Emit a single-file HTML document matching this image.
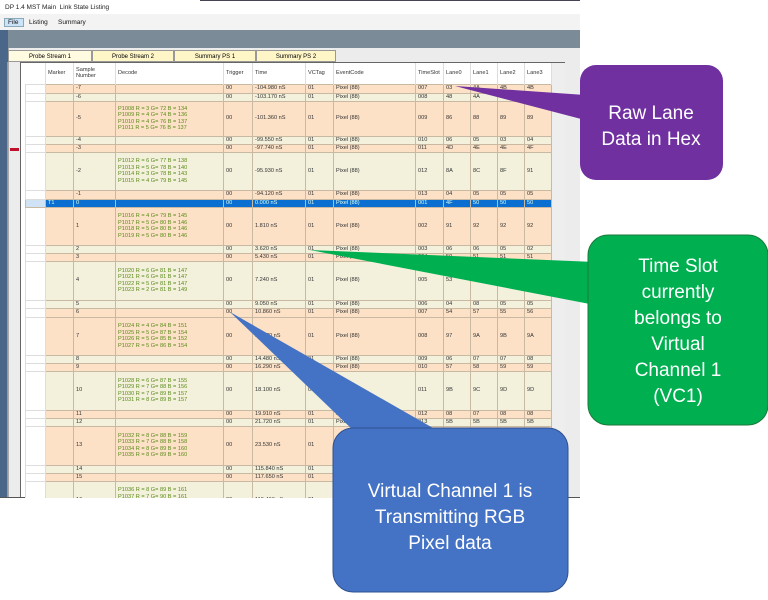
<!DOCTYPE html>
<html><head><meta charset="utf-8"><style>
*{margin:0;padding:0;box-sizing:border-box}
body{width:768px;height:600px;background:#fff;position:relative;overflow:hidden;font-family:"Liberation Sans",sans-serif}
.abs{position:absolute}
table{border-collapse:collapse;table-layout:fixed;font-size:5.6px;color:#333}
td{border:1px solid #c9b9a3;padding:0 2px;vertical-align:middle;white-space:nowrap;overflow:hidden;line-height:6.5px}
tr.p td{background:#fde1c6}
tr.c td{background:#f3f1dc}
tr.b td{background:#0a6fd1;color:#dfe}
td.h{background:#fff!important;border-color:#ddd}
.g{color:#5a8a1a}
th{font-weight:normal;font-size:5.6px;text-align:left;padding:0 2px;border-right:1px solid #ddd;color:#333;line-height:6px}
.t{font-size:19px;fill:#fff;text-anchor:middle;font-family:"Liberation Sans",sans-serif}
</style></head><body>
<div class="abs" style="left:0;top:0;width:580px;height:14px;background:#fff;font-size:6.5px;padding:4px 0 0 5px;color:#222">DP 1.4 MST Main &nbsp;Link State Listing</div>
<div class="abs" style="left:200px;top:0;width:380px;height:1px;background:#445"></div>
<div class="abs" style="left:0;top:14px;width:580px;height:16px;background:#f3f3f3;font-size:6.5px;color:#111"><span style="position:absolute;left:4px;top:4px;width:20px;height:9px;background:#cce3f7;border:1px solid #8ab;padding-left:3px">File</span><span style="position:absolute;left:29px;top:5px">Listing</span><span style="position:absolute;left:58px;top:5px">Summary</span></div>
<div class="abs" style="left:0;top:30px;width:580px;height:18px;background:#7c8b98"></div>
<div class="abs" style="left:0;top:48px;width:580px;height:450px;background:#ececec"></div>
<div class="abs" style="left:0;top:30px;width:8px;height:468px;background:#4a6688"></div>
<div class="abs" style="left:7px;top:62px;width:1px;height:436px;background:#999"></div>
<div class="abs" style="left:8px;top:48px;width:1px;height:450px;background:#aaa"></div>
<div class="abs" style="left:10px;top:148px;width:9px;height:3px;background:#c0102a"></div>
<div class="abs" style="left:20px;top:62px;width:1px;height:436px;background:#666"></div>
<div class="abs" style="left:8px;top:50px;width:84px;height:12px;background:#fffbe0;border:1px solid #999;font-size:6px;text-align:center;padding-top:3px">Probe Stream 1</div>
<div class="abs" style="left:92px;top:50px;width:82px;height:12px;background:#fff6c8;border:1px solid #999;font-size:6px;text-align:center;padding-top:3px">Probe Stream 2</div>
<div class="abs" style="left:174px;top:50px;width:82px;height:12px;background:#fff6c8;border:1px solid #999;font-size:6px;text-align:center;padding-top:3px">Summary PS 1</div>
<div class="abs" style="left:256px;top:50px;width:80px;height:12px;background:#fff6c8;border:1px solid #999;font-size:6px;text-align:center;padding-top:3px">Summary PS 2</div>
<div class="abs" style="left:21px;top:62px;width:544px;height:436px;background:#fff;border-top:1px solid #666"></div>
<div class="abs" style="left:551px;top:63px;width:14px;height:435px;background:#eee"></div>
<div class="abs" style="left:0;top:497px;width:580px;height:1px;background:#555"></div>
<table class="abs" style="left:25px;top:63px;width:526px">
<colgroup><col style="width:20px"><col style="width:28px"><col style="width:42px"><col style="width:108px"><col style="width:29px"><col style="width:53px"><col style="width:28px"><col style="width:82px"><col style="width:28px"><col style="width:27px"><col style="width:27px"><col style="width:27px"><col style="width:27px"></colgroup>
<tr style="height:21px;background:#fff"><th></th><th>Marker</th><th>Sample<br>Number</th><th>Decode</th><th>Trigger</th><th>Time</th><th>VCTag</th><th>EventCode</th><th>TimeSlot</th><th>Lane0</th><th>Lane1</th><th>Lane2</th><th>Lane3</th></tr>
<tr class="p" style="height:9px"><td class="h"></td><td></td><td>-7</td><td></td><td>00</td><td>-104.980 nS</td><td>01</td><td>Pixel (88)</td><td>007</td><td>03</td><td>4A</td><td>4B</td><td>4B</td></tr>
<tr class="c" style="height:8px"><td class="h"></td><td></td><td>-6</td><td></td><td>00</td><td>-103.170 nS</td><td>01</td><td>Pixel (88)</td><td>008</td><td>48</td><td>4A</td><td>4B</td><td>4B</td></tr>
<tr class="p" style="height:35px"><td class="h"></td><td></td><td>-5</td><td class="g">P1008 R = 3 G= 72 B = 134<br>P1009 R = 4 G= 74 B = 136<br>P1010 R = 4 G= 76 B = 137<br>P1011 R = 5 G= 76 B = 137</td><td>00</td><td>-101.360 nS</td><td>01</td><td>Pixel (88)</td><td>009</td><td>86</td><td>88</td><td>89</td><td>89</td></tr>
<tr class="c" style="height:8px"><td class="h"></td><td></td><td>-4</td><td></td><td>00</td><td>-99.550 nS</td><td>01</td><td>Pixel (88)</td><td>010</td><td>06</td><td>05</td><td>03</td><td>04</td></tr>
<tr class="p" style="height:8px"><td class="h"></td><td></td><td>-3</td><td></td><td>00</td><td>-97.740 nS</td><td>01</td><td>Pixel (88)</td><td>011</td><td>4D</td><td>4E</td><td>4E</td><td>4F</td></tr>
<tr class="c" style="height:38px"><td class="h"></td><td></td><td>-2</td><td class="g">P1012 R = 6 G= 77 B = 138<br>P1013 R = 5 G= 78 B = 140<br>P1014 R = 3 G= 78 B = 143<br>P1015 R = 4 G= 79 B = 145</td><td>00</td><td>-95.930 nS</td><td>01</td><td>Pixel (88)</td><td>012</td><td>8A</td><td>8C</td><td>8F</td><td>91</td></tr>
<tr class="p" style="height:9px"><td class="h"></td><td></td><td>-1</td><td></td><td>00</td><td>-94.120 nS</td><td>01</td><td>Pixel (88)</td><td>013</td><td>04</td><td>05</td><td>05</td><td>05</td></tr>
<tr class="b" style="height:8px"><td style="background:#cfe3f5"></td><td>T1</td><td>0</td><td></td><td>00</td><td>0.000 nS</td><td>01</td><td>Pixel (88)</td><td>001</td><td>4F</td><td>50</td><td>50</td><td>50</td></tr>
<tr class="p" style="height:38px"><td class="h"></td><td></td><td>1</td><td class="g">P1016 R = 4 G= 79 B = 145<br>P1017 R = 5 G= 80 B = 146<br>P1018 R = 5 G= 80 B = 146<br>P1019 R = 5 G= 80 B = 146</td><td>00</td><td>1.810 nS</td><td>01</td><td>Pixel (88)</td><td>002</td><td>91</td><td>92</td><td>92</td><td>92</td></tr>
<tr class="c" style="height:8px"><td class="h"></td><td></td><td>2</td><td></td><td>00</td><td>3.620 nS</td><td>01</td><td>Pixel (88)</td><td>003</td><td>06</td><td>06</td><td>05</td><td>02</td></tr>
<tr class="p" style="height:8px"><td class="h"></td><td></td><td>3</td><td></td><td>00</td><td>5.430 nS</td><td>01</td><td>Pixel (88)</td><td>004</td><td>50</td><td>51</td><td>51</td><td>51</td></tr>
<tr class="c" style="height:39px"><td class="h"></td><td></td><td>4</td><td class="g">P1020 R = 6 G= 81 B = 147<br>P1021 R = 6 G= 81 B = 147<br>P1022 R = 5 G= 81 B = 147<br>P1023 R = 2 G= 81 B = 149</td><td>00</td><td>7.240 nS</td><td>01</td><td>Pixel (88)</td><td>005</td><td>53</td><td>54</td><td>55</td><td>55</td></tr>
<tr class="c" style="height:8px"><td class="h"></td><td></td><td>5</td><td></td><td>00</td><td>9.050 nS</td><td>01</td><td>Pixel (88)</td><td>006</td><td>04</td><td>08</td><td>05</td><td>05</td></tr>
<tr class="p" style="height:9px"><td class="h"></td><td></td><td>6</td><td></td><td>00</td><td>10.860 nS</td><td>01</td><td>Pixel (88)</td><td>007</td><td>54</td><td>57</td><td>55</td><td>56</td></tr>
<tr class="p" style="height:38px"><td class="h"></td><td></td><td>7</td><td class="g">P1024 R = 4 G= 84 B = 151<br>P1025 R = 5 G= 87 B = 154<br>P1026 R = 5 G= 85 B = 152<br>P1027 R = 5 G= 86 B = 154</td><td>00</td><td>12.670 nS</td><td>01</td><td>Pixel (88)</td><td>008</td><td>97</td><td>9A</td><td>9B</td><td>9A</td></tr>
<tr class="c" style="height:8px"><td class="h"></td><td></td><td>8</td><td></td><td>00</td><td>14.480 nS</td><td>01</td><td>Pixel (88)</td><td>009</td><td>06</td><td>07</td><td>07</td><td>08</td></tr>
<tr class="p" style="height:8px"><td class="h"></td><td></td><td>9</td><td></td><td>00</td><td>16.290 nS</td><td>01</td><td>Pixel (88)</td><td>010</td><td>57</td><td>58</td><td>59</td><td>59</td></tr>
<tr class="c" style="height:39px"><td class="h"></td><td></td><td>10</td><td class="g">P1028 R = 6 G= 87 B = 155<br>P1029 R = 7 G= 88 B = 156<br>P1030 R = 7 G= 89 B = 157<br>P1031 R = 8 G= 89 B = 157</td><td>00</td><td>18.100 nS</td><td>01</td><td>Pixel (88)</td><td>011</td><td>9B</td><td>9C</td><td>9D</td><td>9D</td></tr>
<tr class="p" style="height:8px"><td class="h"></td><td></td><td>11</td><td></td><td>00</td><td>19.910 nS</td><td>01</td><td>Pixel (88)</td><td>012</td><td>08</td><td>07</td><td>08</td><td>08</td></tr>
<tr class="c" style="height:8px"><td class="h"></td><td></td><td>12</td><td></td><td>00</td><td>21.720 nS</td><td>01</td><td>Pixel (88)</td><td>013</td><td>5B</td><td>5B</td><td>5B</td><td>5B</td></tr>
<tr class="p" style="height:39px"><td class="h"></td><td></td><td>13</td><td class="g">P1032 R = 8 G= 88 B = 159<br>P1033 R = 7 G= 88 B = 158<br>P1034 R = 8 G= 89 B = 160<br>P1035 R = 8 G= 89 B = 160</td><td>00</td><td>23.530 nS</td><td>01</td><td>Pixel (88)</td><td>014</td><td>9E</td><td>9F</td><td>A0</td><td>A0</td></tr>
<tr class="c" style="height:8px"><td class="h"></td><td></td><td>14</td><td></td><td>00</td><td>115.840 nS</td><td>01</td><td>Pixel (88)</td><td>015</td><td>08</td><td>08</td><td>08</td><td>08</td></tr>
<tr class="p" style="height:8px"><td class="h"></td><td></td><td>15</td><td></td><td>00</td><td>117.650 nS</td><td>01</td><td>Pixel (88)</td><td>016</td><td>5C</td><td>5C</td><td>5C</td><td>5C</td></tr>
<tr class="c" style="height:38px"><td class="h"></td><td></td><td>16</td><td class="g">P1036 R = 8 G= 89 B = 161<br>P1037 R = 7 G= 90 B = 161<br>P1038 R = 8 G= 90 B = 162<br>P1039 R = 8 G= 90 B = 162</td><td>00</td><td>119.460 nS</td><td>01</td><td>Pixel (88)</td><td>017</td><td>A1</td><td>A2</td><td>A2</td><td>A3</td></tr>
</table>
<div class="abs" style="left:0;top:498px;width:768px;height:102px;background:#fff"></div>
<svg class="abs" style="left:0;top:0" width="768" height="600">
<polygon points="455,86 585,95 585,120" fill="#7030a0"/>
<rect x="580" y="65" width="143" height="115" rx="16" fill="#7030a0"/>
<text class="t" x="651" y="119">Raw Lane</text>
<text class="t" x="651" y="145">Data in Hex</text>
<polygon points="310,250 595,262 595,305" fill="#00b050"/>
<rect x="588" y="235" width="180" height="190" rx="20" fill="#00b050" stroke="#1a7a3a" stroke-width="1"/>
<text class="t" x="678" y="272">Time Slot</text>
<text class="t" x="678" y="298">currently</text>
<text class="t" x="678" y="324">belongs to</text>
<text class="t" x="678" y="350">Virtual</text>
<text class="t" x="678" y="376">Channel 1</text>
<text class="t" x="678" y="402">(VC1)</text>
<polygon points="230,312 355,432 440,432" fill="#4472c4"/>
<rect x="333" y="428" width="235" height="164" rx="20" fill="#4472c4" stroke="#2f528f" stroke-width="1"/>
<text class="t" x="450" y="497">Virtual Channel 1 is</text>
<text class="t" x="450" y="523">Transmitting RGB</text>
<text class="t" x="450" y="549">Pixel data</text>
</svg>
</body></html>
